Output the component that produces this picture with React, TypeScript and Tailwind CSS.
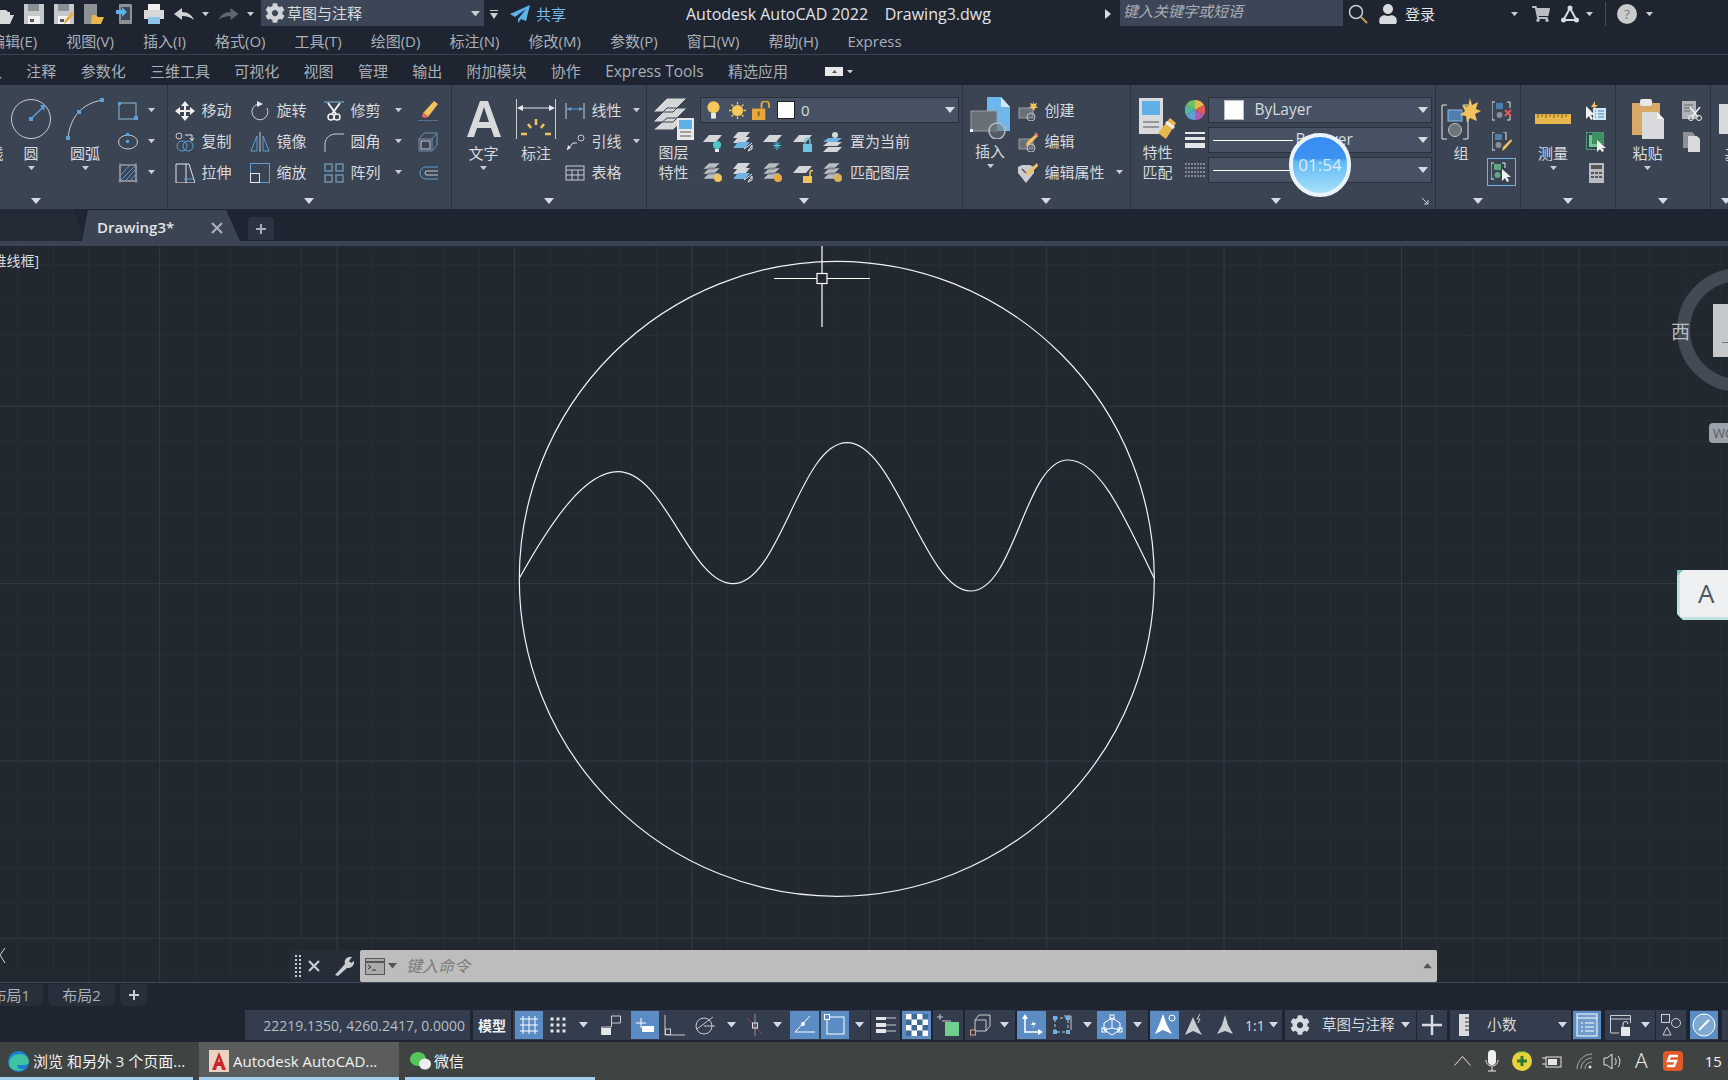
import type { ReactNode } from "react";
import { FaCog, FaUser, FaShoppingCart } from "react-icons/fa";

const G = "#c9ccd0";
const L = "#e4e6e8";
const B = "#5f9fd6";
const Y = "#f2c25c";

const S = ({ w = 20, h = 20, children }: { w?: number; h?: number; children: ReactNode }) => (
  <svg width={w} height={h} viewBox={`0 0 ${w} ${h}`} fill="none" className="shrink-0">
    {children}
  </svg>
);

const Caret = ({ c = "#c9ccd0", w = 8 }: { c?: string; w?: number }) => (
  <svg width={w} height={w * 0.6} viewBox="0 0 10 6" className="shrink-0">
    <path d="M0 0h10L5 6z" fill={c} />
  </svg>
);

// quick access bar
const Floppy = ({ children }: { children?: ReactNode }) => (
  <S>
    <path d="M0 0h20v20H0z" fill="#c6c8ca" />
    <rect x="4" width="11" height="7" fill="#8b9096" />
    <rect x="4" y="12" width="12" height="8" fill="#f0f0f0" />
    <rect x="6" y="15" width="4" height="3" fill="#555" />
    {children}
  </S>
);
const TitleIcons = {
  folder: (
    <S w={14} h={20}>
      <path d="M0 6h6l2 2h2v3h4l-4 9H0z" fill="#d8dadc" />
    </S>
  ),
  third: (
    <S>
      <rect x="0" y="0" width="13" height="20" fill="#8d9196" />
      <path d="M8 11h4l2 2h6l-3 7H7z" fill="#e8b84c" />
    </S>
  ),
  fourth: (
    <S w={16}>
      <rect x="3" y="0" width="13" height="20" rx="1" fill="#8d9196" />
      <rect x="5" y="3" width="9" height="13" fill="#3c4656" />
      <path d="M0 6h6V3l5 5-5 5v-3H0z" fill="#5bb3e6" />
    </S>
  ),
  print: (
    <S>
      <rect x="4" y="0" width="12" height="6" fill="#f0f0f0" />
      <rect x="0" y="6" width="20" height="9" fill="#d8d8d8" />
      <rect x="4" y="13" width="12" height="7" fill="#8fc4ea" />
    </S>
  ),
};

const Tool = ({
  icon,
  label,
  caret,
  gap = "ml-[7px]",
  caretGap = "ml-[14px]",
}: {
  icon: ReactNode;
  label?: string;
  caret?: boolean;
  gap?: string;
  caretGap?: string;
}) => (
  <div className="flex items-center h-[31px]">
    <span className="w-[20px] flex justify-center">{icon}</span>
    {label && <span className={`${gap} text-[15px] whitespace-nowrap text-[#d7dade]`}>{label}</span>}
    {caret && (
      <span className={caretGap}>
        <Caret w={7} />
      </span>
    )}
  </div>
);

const Big = ({
  w,
  icon,
  lines,
  caret,
  top = "h-[48px]",
}: {
  w: string;
  icon: ReactNode;
  lines: string[];
  caret?: boolean;
  top?: string;
}) => (
  <div className={`${w} flex flex-col items-center shrink-0`}>
    <div className={`${top} flex items-center justify-center`}>{icon}</div>
    {lines.map((l) => (
      <span key={l} className="h-[20px] leading-[20px] text-[15px] whitespace-nowrap text-[#d7dade]">
        {l}
      </span>
    ))}
    {caret && (
      <div className="h-[10px] flex items-center">
        <Caret w={7} />
      </div>
    )}
  </div>
);

const Panel = ({ w, children, corner }: { w: string; children: ReactNode; corner?: boolean }) => (
  <div className={`${w} shrink-0 h-full flex flex-col border-r border-[#2a313c] relative`}>
    <div className="flex-1 flex pt-[10px] min-h-0">{children}</div>
    <div className={`h-[21px] pt-[5px] flex items-center justify-center ${corner ? "pr-[14px]" : ""}`}>
      <Caret w={10} c="#d7dade" />
    </div>
    {corner && (
      <svg width="9" height="9" viewBox="0 0 9 9" className="absolute right-[5px] bottom-[3px]">
        <path d="M1 1l6 6M7 3v4H3" stroke="#c9ccd0" fill="none" />
      </svg>
    )}
  </div>
);

const Drop = ({ children, className = "" }: { children: ReactNode; className?: string }) => (
  <div className={`${className} h-[26px] bg-[#465264] border border-[#2a313c] flex items-center relative`}>
    {children}
    <span className="absolute right-[3px] top-[9px]">
      <Caret w={10} c="#d7dade" />
    </span>
  </div>
);

const I = {
  circle: (
    <svg width="40" height="40" viewBox="0 0 40 40" fill="none">
      <circle cx="20" cy="20" r="19.5" stroke={G} />
      <path d="M20 20l12-12" stroke={B} strokeWidth="1.5" />
      <rect x="18" y="18" width="4" height="4" fill={B} />
      <path d="M29 6l5 0-1 6z" fill={B} />
    </svg>
  ),
  arc: (
    <svg width="38" height="42" viewBox="0 0 38 42" fill="none">
      <path d="M2 40C4 20 15 6 36 2" stroke={G} />
      <rect y="38" width="4" height="4" fill={B} />
      <rect x="11" y="12" width="4" height="4" fill={B} />
      <rect x="34" width="4" height="4" fill={B} />
    </svg>
  ),
  rect: (
    <S>
      <rect x="1" y="2" width="17" height="16" stroke="#8fb8dc" />
      <rect x="0" y="1" width="3" height="3" fill={B} />
      <rect x="16" y="15" width="4" height="4" fill={B} />
    </S>
  ),
  ellipse: (
    <S>
      <ellipse cx="10" cy="10" rx="9.5" ry="7" stroke={G} />
      <rect x="8" y="8" width="3" height="3" fill={B} />
      <rect x="8" y="1" width="3" height="3" fill={B} />
    </S>
  ),
  hatch: (
    <S>
      <rect x="2" y="2" width="16" height="16" stroke={G} />
      <path d="M3 12l8-9M3 17L17 3M8 17l9-10M13 17l4-5" stroke={B} />
      <path d="M2 0v20M18 0v20M0 18h20" stroke="#8d939b" />
    </S>
  ),
  move: (
    <S>
      <path d="M10 0l4 5h-3v4h4V6l5 4-5 4v-3h-4v4h3l-4 5-4-5h3v-4H5v3l-5-4 5-4v3h4V5H6z" fill="#f0f0f0" />
    </S>
  ),
  rotate: (
    <S>
      <path d="M8 3a8 8 0 1 0 9 4" stroke={G} />
      <path d="M7 0l6 3-6 3z" fill={L} />
    </S>
  ),
  trim: (
    <S>
      <path d="M0 1h20" stroke="#6d90ad" strokeWidth="1.5" />
      <path d="M4 2l8 11M16 2l-8 11" stroke="#f0f0f0" strokeWidth="2" />
      <circle cx="7" cy="16" r="3" stroke="#f0f0f0" strokeWidth="1.5" />
      <circle cx="13" cy="16" r="3" stroke="#f0f0f0" strokeWidth="1.5" />
    </S>
  ),
  erase: (
    <S>
      <path d="M16 0l4 3-10 13-5 0 1-5z" fill={Y} />
      <path d="M5 11l5 4-2 2-4-1z" fill="#e66" />
      <path d="M0 20h20" stroke={B} />
    </S>
  ),
  copy: (
    <S>
      <rect x="1" y="1" width="6" height="6" rx="3" stroke={G} />
      <path d="M10 3h7v5M15 6l2 3 2-3" stroke={L} />
      <circle cx="7" cy="14" r="5" stroke={B} />
      <circle cx="13" cy="14" r="5" stroke={B} />
    </S>
  ),
  mirror: (
    <S>
      <path d="M7 4L1 19h6z" stroke={B} />
      <path d="M13 4l6 15h-6z" stroke={B} />
      <path d="M10 0v20" stroke={G} />
    </S>
  ),
  fillet: (
    <S>
      <path d="M1 20V12C1 6 6 2 12 2h8" stroke={G} />
    </S>
  ),
  solid: (
    <S>
      <path d="M1 7h13v12H1zM1 7l5-6h13l-5 6M19 1v12l-5 6" stroke="#6d90ad" />
      <rect x="3" y="9" width="9" height="8" stroke={G} />
    </S>
  ),
  stretch: (
    <S>
      <path d="M1 1h10v19H1zM11 1h3l6 19h-9" stroke={L} />
      <path d="M9 16h9" stroke={B} />
    </S>
  ),
  scale: (
    <S>
      <rect x="0.5" y="0.5" width="19" height="19" stroke={B} />
      <rect x="0.5" y="10.5" width="9" height="9" stroke={L} />
    </S>
  ),
  array: (
    <S>
      <rect x="1" y="1" width="7" height="7" stroke="#6d90ad" strokeWidth="1.5" />
      <rect x="12" y="1" width="7" height="7" stroke="#6d90ad" strokeWidth="1.5" />
      <rect x="1" y="12" width="7" height="7" stroke="#6d90ad" strokeWidth="1.5" />
      <rect x="12" y="12" width="7" height="7" stroke="#6d90ad" strokeWidth="1.5" />
    </S>
  ),
  offset: (
    <S>
      <path d="M20 4H8a6 6 0 0 0 0 12h12" stroke={B} />
      <path d="M20 8H9a2 2 0 0 0 0 4h11" stroke={G} />
    </S>
  ),
  bigA: (
    <svg width="34" height="36" viewBox="0 0 34 36">
      <path d="M13 0h8l13 36h-7l-3-9H10l-3 9H0zM12 21h10L17 6z" fill="#d8dadc" fillRule="evenodd" />
    </svg>
  ),
  dim: (
    <svg width="40" height="40" viewBox="0 0 40 40" fill="none">
      <path d="M0.5 0v40M39.5 0v40" stroke={G} />
      <path d="M2 9h36" stroke={L} />
      <path d="M1 9l6-3v6zM39 9l-6-3v6z" fill={L} />
      <path d="M20 20v6M12 25l3 4M28 25l-3 4M5 35h6M29 35h6" stroke={Y} strokeWidth="2.5" />
    </svg>
  ),
  linear: (
    <S>
      <path d="M1 2v16M19 2v16" stroke={G} />
      <path d="M2 8h16" stroke={B} />
      <path d="M2 8l4-2v4zM18 8l-4-2v4z" fill={B} />
    </S>
  ),
  leader: (
    <S>
      <path d="M2 18l6-7h4" stroke={L} />
      <path d="M2 18l1-5 3 3z" fill={L} />
      <circle cx="16" cy="6" r="3" stroke={G} />
    </S>
  ),
  table: (
    <S>
      <rect x="1" y="3" width="18" height="14" stroke={G} />
      <path d="M1 7h18M1 12h18M7 7v10M13 7v10" stroke={G} />
    </S>
  ),
  layers: (
    <svg width="42" height="42" viewBox="0 0 42 42" fill="none">
      <path d="M14 0h20l-14 14H0zM14 10h20L20 24H0zM14 20h20L20 32H0z" fill="#d4d6d8" stroke="#3b4453" />
      <rect x="24" y="20" width="17" height="24" fill="#e8e8e8" />
      <rect x="26" y="22" width="13" height="9" fill="#5fb0e6" />
      <path d="M27 34h11M27 38h11" stroke="#555" />
    </svg>
  ),
  layerBulb: (
    <S>
      <path d="M6 3h13l-6 7H0z" fill="#d4d6d8" />
      <circle cx="14" cy="13" r="4" fill="#50c8c8" />
      <rect x="12" y="17" width="4" height="3" fill="#e8e8e8" />
    </S>
  ),
  layerArrow: (
    <S>
      <path d="M5 0h12L12 6H0zM5 5h12l-5 6H0z" fill="#d4d6d8" />
      <path d="M5 10h12l-5 6H0z" fill="#6fb3e6" />
      <path d="M11 17l8-6M15 19l4-2v-4z" stroke="#f0f0f0" />
    </S>
  ),
  layerFrost: (
    <S>
      <path d="M6 3h13l-6 7H0z" fill="#d4d6d8" />
      <path d="M14 9v9M10 13.500h8M11 10.500l6 6M17 10.500l-6 6" stroke="#50c8e0" />
    </S>
  ),
  layerLock: (
    <S>
      <path d="M6 3h13l-6 7H0z" fill="#d4d6d8" />
      <rect x="10" y="12" width="9" height="8" fill="#6cc6e0" />
      <path d="M12 12V9a2.500 2.500 0 0 1 5 0v3" stroke="#6cc6e0" strokeWidth="1.5" />
    </S>
  ),
  layerCurrent: (
    <S>
      <circle cx="12" cy="3" r="3" fill="#d8d8d8" />
      <path d="M5 6h14l-5 4H0z" fill="#6fb3e6" />
      <path d="M5 10h14l-5 4H0zM5 15h14l-5 5H0z" fill="#d4d6d8" />
    </S>
  ),
  layerGrey: (c: string) => (
    <S>
      <path d="M6 0h11l-6 6H0zM6 5h11l-6 6H0zM6 10h11l-6 6H0z" fill="#b8bbbf" stroke="#3b4453" strokeWidth=".5" />
      <circle cx="15" cy="15" r="4" fill={c} />
    </S>
  ),
  layerUnlock: (
    <S>
      <path d="M6 3h13l-6 7H0z" fill="#d4d6d8" />
      <rect x="10" y="13" width="9" height="7" fill={Y} />
      <path d="M17 13v-3a2.500 2.500 0 0 1 5 0" stroke={Y} strokeWidth="1.5" />
    </S>
  ),
  bulb: (
    <svg width="13" height="19" viewBox="0 0 16 22">
      <circle cx="8" cy="7" r="7.500" fill="#f6c85c" />
      <rect x="5" y="14" width="6" height="7" fill="#e8e8e8" />
    </svg>
  ),
  sun: (
    <svg width="17" height="17" viewBox="0 0 20 20">
      <circle cx="10" cy="10" r="6.500" fill="#f6c85c" />
      <path d="M10 0v3M10 17v3M0 10h3M17 10h3M3 3l2 2M15 15l2 2M17 3l-2 2M3 17l2-2" stroke="#f6c85c" strokeWidth="1.5" />
    </svg>
  ),
  lockOpen: (
    <svg width="19" height="19" viewBox="0 0 20 20" fill="none">
      <rect x="0" y="8" width="14" height="12" fill="#e8a93c" />
      <path d="M10 8V4a4 4 0 0 1 8 0v3" stroke="#e8a93c" strokeWidth="2" />
      <rect x="6" y="11" width="2" height="5" fill="#8a5f16" />
    </svg>
  ),
  insert: (
    <svg width="40" height="42" viewBox="0 0 40 42" fill="none">
      <path d="M17 0h14l9 10v24H17z" fill="#6fb6ec" />
      <path d="M31 0l9 10h-9z" fill="#cfe6f7" />
      <rect x="1" y="14" width="26" height="20" fill="#6a7078" stroke="#9a9ea4" />
      <circle cx="27" cy="34" r="8" stroke="#b8bbbf" strokeWidth="1.5" fill="#6a707888" />
      <rect y="32" width="3" height="3" fill="#f0f0f0" />
    </svg>
  ),
  create: (
    <S>
      <rect x="1" y="7" width="14" height="10" stroke="#9a9ea4" fill="#6a7078" />
      <circle cx="13" cy="16" r="4" stroke="#c0c3c7" />
      <path d="M15 0l1 3 3-1-1 3 2 2-3 0-1 3-2-3-3 0 2-2-1-3 3 1z" fill={Y} />
    </S>
  ),
  editBlock: (
    <S>
      <rect x="1" y="7" width="14" height="10" stroke="#9a9ea4" fill="#6a7078" />
      <circle cx="13" cy="16" r="4" stroke="#c0c3c7" />
      <path d="M19 1l1 3-9 9-3 1 1-4z" fill={Y} />
      <path d="M17 1l3 3" stroke="#e66" strokeWidth="2" />
    </S>
  ),
  editAttr: (
    <S>
      <path d="M0 4l4-2h8l4 2v6l-8 10-8-10z" fill="#c9ccd0" />
      <path d="M4 6l4 4" stroke="#555" strokeWidth="1.5" />
      <path d="M19 0l1 3-9 9-3 1 1-4z" fill={Y} />
    </S>
  ),
  matchProp: (
    <svg width="38" height="42" viewBox="0 0 38 42" fill="none">
      <rect width="24" height="36" fill="#d8dadc" />
      <rect x="3" y="3" width="18" height="14" fill="#5fb0e6" />
      <path d="M4 24h16M4 29h16" stroke="#555" />
      <path d="M31 20l6 5-10 16-8-6z" fill="#e8b84c" />
      <path d="M27 24l8 6" stroke="#f0f0f0" strokeWidth="3" />
    </svg>
  ),
  wheel: (
    <svg width="20" height="20" viewBox="0 0 20 20">
      <path d="M10 10V0a10 10 0 0 1 9 5z" fill="#e8b84c" />
      <path d="M10 10l9-5a10 10 0 0 1 0 10z" fill="#e05a5a" />
      <path d="M10 10l9 5a10 10 0 0 1-9 5z" fill="#b05ab0" />
      <path d="M10 10v10a10 10 0 0 1-9-5z" fill="#5f9fd6" />
      <path d="M10 10l-9 5a10 10 0 0 1 0-10z" fill="#50b8a0" />
      <path d="M10 10L1 5a10 10 0 0 1 9-5z" fill="#70c060" />
    </svg>
  ),
  weight: (
    <S>
      <rect y="2" width="20" height="2" fill={L} />
      <rect y="7" width="20" height="3" fill={L} />
      <rect y="13" width="20" height="5" fill={L} />
    </S>
  ),
  ltype: (
    <S>
      <path d="M0 4h20M0 8h20M0 12h20M0 16h20" stroke={G} strokeDasharray="2 1" />
    </S>
  ),
  group: (
    <svg width="40" height="42" viewBox="0 0 40 42" fill="none">
      <path d="M6 7H1v34h5M22 7h5v34h-5" stroke={L} />
      <rect x="7" y="12" width="14" height="11" fill="#4f7fae" stroke="#8fb8dc" />
      <circle cx="14" cy="32" r="6.500" fill="#6f747a" stroke="#c0c3c7" />
      <path d="M29 0l2 7 6-3-2 7 5 2-6 3 2 7-7-3-3 5-1-7-6-1 5-4-3-6 6 2z" fill={Y} />
    </svg>
  ),
  ungroup: (
    <S>
      <path d="M3 1H0v18h3M15 1h3v6M18 14v5h-3" stroke={L} />
      <rect x="4" y="2" width="7" height="6" fill="#4f7fae" />
      <circle cx="7.500" cy="14" r="3" fill="#8a8f94" />
      <path d="M13 9l6 6M19 9l-6 6" stroke="#e05a5a" strokeWidth="2" />
    </S>
  ),
  editGroup: (
    <S>
      <path d="M3 0H0v18h3M11 0h3v8" stroke={L} />
      <rect x="3" y="2" width="7" height="6" fill="#4f7fae" />
      <circle cx="6.500" cy="13" r="3" fill="#8a8f94" />
      <path d="M19 7l1 2-7 8-3 2 1-4z" fill={Y} />
    </S>
  ),
  selGroup: (
    <S>
      <path d="M3 1H0v16h3M11 1h3v5" stroke={L} />
      <rect x="3" y="2" width="7" height="6" fill="#5fa87f" />
      <circle cx="6.500" cy="13" r="3" fill="#5fa87f" />
      <path d="M11 7v12l3-3 2 4 2-1-2-4h4z" fill="#f0f0f0" />
    </S>
  ),
  ruler: (
    <svg width="36" height="10" viewBox="0 0 36 10">
      <rect width="36" height="10" fill="#e8b84c" />
      <path d="M3 0v4M7 0v3M11 0v4M15 0v3M19 0v4M23 0v3M27 0v4M31 0v3" stroke="#7d5f1c" />
    </svg>
  ),
  quickProp: (
    <S>
      <path d="M9 0L5 6h3L6 9l6-5H9z" fill={Y} />
      <rect x="7" y="7" width="13" height="12" fill="#cfe6f7" />
      <path d="M12 10h6M12 13h6M12 16h6M9 10h1M9 13h1M9 16h1" stroke="#4f7fae" />
      <path d="M0 5v13l3-3 2 4 2-1-2-4h4z" fill="#f0f0f0" />
    </S>
  ),
  selectSim: (
    <S>
      <rect x="0.5" y="0.5" width="17" height="17" stroke="#50c080" strokeDasharray="2 1" />
      <rect x="3" y="3" width="12" height="12" fill="#70c890" />
      <rect x="6" y="1" width="11" height="11" fill="#3e9060" />
      <path d="M11 8v12l3-3 2 3 2-1-2-3h4z" fill="#f0f0f0" />
    </S>
  ),
  calc: (
    <svg width="15" height="20" viewBox="0 0 15 20">
      <rect width="15" height="20" fill="#b8bbbf" />
      <rect x="2" y="2" width="11" height="4" fill="#555" />
      <path d="M2 9h3v2H2zM6 9h3v2H6zM10 9h3v2h-3zM2 13h3v2H2zM6 13h3v2H6zM10 13h3v2h-3z" fill="#555" />
    </svg>
  ),
  paste: (
    <svg width="32" height="40" viewBox="0 0 32 40">
      <rect y="4" width="28" height="32" fill="#d8a868" />
      <rect x="8" y="0" width="12" height="7" rx="2" fill="#e8e8e8" />
      <path d="M10 13h15l7 7v20H10z" fill="#d8dadc" />
      <path d="M25 13l7 7h-7z" fill="#f4f4f4" />
    </svg>
  ),
  cut: (
    <S>
      <path d="M0 0h14v18H0z" fill="#b0b3b7" />
      <path d="M2 4h9M2 7h9M2 10h6" stroke="#666" />
      <path d="M8 6l8 10M18 6l-8 10" stroke="#f0f0f0" strokeWidth="1.5" />
      <circle cx="9" cy="17" r="2.500" stroke="#f0f0f0" />
      <circle cx="17" cy="17" r="2.500" stroke="#f0f0f0" />
    </S>
  ),
  copyDoc: (
    <S>
      <path d="M1 0h9l3 3v13H1z" fill="#8d9196" />
      <path d="M6 4h9l3 3v13H6z" fill="#d8dadc" />
    </S>
  ),
};

const StatusIcons = {
  grid: (
    <S w={22} h={22}>
      <path d="M5 2v18M11 2v18M17 2v18M2 5h18M2 11h18M2 17h18" stroke="#fff" />
    </S>
  ),
  dots: (
    <S w={16} h={16}>
      {[2, 8, 14].map((y) =>
        [2, 8, 14].map((x) => <rect key={`${x}-${y}`} x={x - 1.5} y={y - 1.5} width="3" height="3" fill={L} />)
      )}
    </S>
  ),
  infer: (
    <S>
      <rect x="0" y="13" width="10" height="7" fill={L} />
      <path d="M0.5 20V12h10V1h9v7h-9" stroke={G} />
    </S>
  ),
  dyn: (
    <S>
      <path d="M1 8h10M6 3v10" stroke="#fff" />
      <rect x="7" y="11" width="12" height="6" fill="#fff" />
    </S>
  ),
  ortho: (
    <S w={22} h={22}>
      <path d="M2 1v20h20" stroke={G} />
      <rect x="2.5" y="15" width="5" height="5.5" stroke={G} />
    </S>
  ),
  polar: (
    <S>
      <circle cx="9" cy="11" r="8" stroke={G} />
      <path d="M2 14L18 2M9 11h11" stroke={G} />
    </S>
  ),
  osnap: (
    <S w={18} h={22}>
      <path d="M9 0v22" stroke="#8d939b" />
      <path d="M1 4l15 16" stroke="#a04848" />
      <rect x="6.5" y="9" width="5" height="5" stroke={L} />
    </S>
  ),
  angle: (
    <S w={22} h={22}>
      <path d="M1 18h20M1 18L16 2" stroke="#fff" />
      <circle cx="9" cy="10" r="2" fill="#fff" />
    </S>
  ),
  ucs: (
    <S w={22} h={22}>
      <rect x="3" y="3" width="17" height="17" stroke="#fff" />
      <rect x="0.5" y="0.5" width="5" height="5" stroke="#fff" fill="#5b8dc4" />
    </S>
  ),
  lweight: (
    <S>
      <rect y="2" width="10" height="3" fill={L} />
      <rect y="8" width="10" height="4" fill={L} />
      <rect y="14" width="10" height="4" fill={L} />
      <path d="M10 3h10M10 10h10M10 16h10" stroke={G} />
    </S>
  ),
  checker: (
    <S w={22} h={22}>
      <rect width="22" height="22" fill="#fff" />
      {[0, 1, 2, 3].map((r) =>
        [0, 1, 2, 3].map((c) =>
          (r + c) % 2 ? <rect key={`${r}${c}`} x={c * 5.5} y={r * 5.5} width="5.5" height="5.5" fill="#3f6a96" /> : null
        )
      )}
    </S>
  ),
  cycle: (
    <S w={22} h={22}>
      <path d="M0 3h6M3 0v6M5 7h9" stroke={G} />
      <rect x="8" y="8" width="14" height="14" fill="#6fcf8f" />
    </S>
  ),
  osnap3d: (
    <S w={21} h={22}>
      <path d="M5 6h11v11H5zM5 6l4-5h11v11l-4 5" stroke={G} />
      <rect x="0.5" y="16" width="5" height="5" stroke="#e0a080" />
    </S>
  ),
  otrack: (
    <S w={22} h={22}>
      <path d="M4 2v16h16" stroke="#fff" strokeWidth="1.5" />
      <path d="M4 0l3 5H1zM22 18l-5-3v6z" fill="#fff" />
      <path d="M13 6l-3 5h3l-2 4 4-6h-3z" fill="#fff" />
    </S>
  ),
  gizmo: (
    <S>
      <rect x="3" y="3" width="13" height="14" stroke={G} strokeDasharray="3 2" />
      <path d="M12 1h7v14" stroke={G} />
      <rect x="1" y="1" width="4" height="4" fill="#6fb3e6" />
      <rect x="14" y="1" width="4" height="4" fill="#6fb3e6" />
      <rect x="1" y="15" width="4" height="4" fill="#6fb3e6" />
      <rect x="14" y="15" width="4" height="4" fill="#6fb3e6" />
    </S>
  ),
  dgizmo: (
    <S w={22} h={22}>
      <path d="M11 4l8 5v7l-8 5-8-5V9z" stroke="#fff" />
      <path d="M11 4v10l8 2M11 14l-8 2" stroke="#fff" />
      <rect x="9" y="1" width="4" height="4" stroke="#fff" />
      <rect x="1" y="14" width="4" height="4" stroke="#fff" />
      <rect x="17" y="14" width="4" height="4" stroke="#fff" />
    </S>
  ),
  anno: (
    <S w={22} h={22}>
      <path d="M9 0l4 11 5 9-9-4-8 4 4-9z" fill="#fff" />
      <circle cx="18" cy="4" r="3" stroke="#fff" />
    </S>
  ),
  annoAuto: (
    <S w={22} h={22}>
      <path d="M9 3l4 9 5 9-9-4-8 4 4-9z" fill={G} />
      <path d="M16 0l-3 5h3l-2 4" stroke={G} />
    </S>
  ),
  annoFill: (
    <S w={20} h={22}>
      <path d="M10 1l3 10 5 9-8-3-8 3 5-9z" fill={G} />
    </S>
  ),
  unitsDoc: (
    <S w={11} h={22}>
      <path d="M0 0h10v22H0z" fill="#d8dadc" />
      <path d="M6 4h4M6 8h4M6 12h4M6 16h4" stroke="#333" />
    </S>
  ),
  quick: (
    <S w={22} h={24}>
      <rect x="1" y="1" width="20" height="22" stroke="#fff" fill="#6f9ccb" />
      <path d="M1 5h20M5 10h2M9 10h9M5 14h2M9 14h9M5 18h2M9 18h9" stroke="#fff" />
    </S>
  ),
  ui: (
    <S w={21} h={22}>
      <path d="M0.5 19V1.500h20V9M0.5 5h20M1 19h8" stroke={G} />
      <rect x="11" y="13" width="9" height="9" fill={L} />
      <path d="M13 13v-3a2.500 2.500 0 0 1 5 0" stroke={L} />
    </S>
  ),
  shapes: (
    <S w={20} h={22}>
      <rect x="0.5" y="0.5" width="8" height="8" stroke={G} />
      <circle cx="15" cy="9" r="4.500" stroke={G} />
      <path d="M6 13l4 8H2z" stroke={G} />
    </S>
  ),
  perf: (
    <S w={24} h={24}>
      <circle cx="12" cy="12" r="11" stroke="#fff" fill="#7fa9d3" />
      <path d="M7 17l10-10" stroke="#fff" strokeWidth="2" />
    </S>
  ),
};

const Btn = ({ w, active, children }: { w: string; active?: boolean; children?: ReactNode }) => (
  <div className={`${w} shrink-0 h-[28px] flex items-center justify-center ${active ? "bg-[#5b8dc4]" : ""}`}>{children}</div>
);
const Block = ({ w, children, ml = "" }: { w: string; children: ReactNode; ml?: string }) => (
  <div className={`${w} ${ml} shrink-0 h-full bg-[#333d4d] flex items-center`}>{children}</div>
);
const StatusCaret = ({ w }: { w: string }) => (
  <div className={`${w} shrink-0 flex justify-center`}>
    <Caret w={9} c="#d7dade" />
  </div>
);

const majorX = Array.from({ length: 10 }, (_, i) => 159.7 + i * 177.4);
const majorY = [229, 406.2, 583.6, 761, 938.4];
const minorX = Array.from({ length: 50 }, (_, i) => 17.8 + i * 35.48);
const minorY = Array.from({ length: 22 }, (_, i) => 229 + i * 35.48);

const Canvas = () => (
  <div className="relative flex-1 min-h-0 bg-[#212830] overflow-hidden border-b border-[#3f4754]">
    <svg width="1728" height="737" viewBox="0 246 1728 737" fill="none" className="absolute left-0 top-0">
      {minorX.map((x) => <path key={x} d={`M${x} 246V983`} stroke="#272f39" />)}
      {minorY.map((y) => <path key={y} d={`M0 ${y}H1728`} stroke="#272f39" />)}
      {majorX.map((x) => <path key={x} d={`M${x} 246V983`} stroke="#323a46" />)}
      {majorY.map((y) => <path key={y} d={`M0 ${y}H1728`} stroke="#323a46" />)}
      <circle cx="836.8" cy="578.8" r="317.5" stroke="#f2f2f2" strokeWidth="1.2" />
      <path
        d="M519.5 578C552 520 585 471.7 618 471.7C665 471.7 690 583.7 733 583.7C780 583.7 800 442.7 847 442.7C895 442.7 925 591 970.5 591C1015 591 1025 460 1068 460C1100 460 1125 518 1154 578"
        stroke="#f2f2f2"
        strokeWidth="1.2"
      />
      <path d="M822 246V273M822 283.5V327M774 278.5H817M827 278.5H870" stroke="#fff" strokeWidth="1.2" />
      <rect x="817" y="273.5" width="10" height="10" stroke="#fff" strokeWidth="1.2" />
      <path d="M5 948L0 955L5 963" stroke="#d8dadc" />
    </svg>

    <span className="absolute left-[-26px] top-[4px] text-[14px] text-[#d7dade] whitespace-nowrap">[二维线框]</span>

    {/* view cube */}
    <div className="absolute left-[1677px] top-[22px] w-[124px] h-[124px] rounded-full border-[13px] border-[#434a55]" />
    <span className="absolute left-[1671px] top-[73px] text-[19px] leading-[26px] text-[#b9bcc0]">西</span>
    <div className="absolute left-[1713px] top-[58px] w-[20px] h-[53px] bg-[#c6c8ca] flex items-end pl-[9px] pb-[14px]">
      <div className="w-[10px] h-[1px] bg-[#777]" />
    </div>
    <div className="absolute left-[1709px] top-[177px] w-[30px] h-[20px] rounded-[4px] bg-[#9da2aa] text-[13px] leading-[20px] pl-[4px] text-[#555c66]">WCS</div>

    {/* annotation tab */}
    <div className="absolute left-[1677px] top-[324px] w-[60px] h-[50px] bg-[#eef0f1] rounded-l-[4px] border-l-[3px] border-b-[3px] border-[#bfe3e0] [clip-path:polygon(6px_0,100%_0,100%_100%,6px_100%,0_calc(100%-6px),0_4px)] text-[26px] text-[#4c5660] flex items-center pl-[18px]">
      A
    </div>
    <div className="absolute left-[1677px] top-[324px] w-[6px] h-[6px] bg-[#6fc6c0] [clip-path:polygon(0_0,100%_0,0_100%)]" />

    {/* command line */}
    <div className="absolute left-[290px] top-[704px] w-[1147px] h-[32px] flex items-center bg-[#262d38] rounded-l-[3px]">
      <svg width="6" height="22" viewBox="0 0 6 22" className="ml-[5px]">
        {[0, 4, 8, 12, 16, 20].map((y) => (
          <g key={y} fill="#c9ccd0">
            <rect y={y} width="2" height="2" />
            <rect x="4" y={y} width="2" height="2" />
          </g>
        ))}
      </svg>
      <svg width="12" height="12" viewBox="0 0 12 12" className="ml-[7px]">
        <path d="M1 1l10 10M11 1L1 11" stroke="#c9ccd0" strokeWidth="2.2" />
      </svg>
      <svg width="20" height="20" viewBox="0 0 20 20" className="ml-[15px]">
        <path d="M0 19L10 8a5.500 5.500 0 0 1 7-7l-3 4 2 2 3-2a6 6 0 0 1-7 7L3 20z" fill="#c9ccd0" />
      </svg>
      <div className="ml-[5px] flex-1 h-full bg-[#bdbdbe] rounded-[2px] flex items-center relative">
        <svg width="20" height="17" viewBox="0 0 20 17" fill="none" className="ml-[5px]">
          <rect x=".5" y=".5" width="19" height="16" stroke="#555" fill="#a9aaab" />
          <path d="M.5 4h19" stroke="#555" strokeWidth="2" />
          <path d="M3 7l3 2-3 2M7 12h4" stroke="#333" />
        </svg>
        <span className="ml-[3px]">
          <Caret w={9} c="#555" />
        </span>
        <span className="ml-[9px] text-[16px] italic text-[#7c7c7c]">键入命令</span>
        <span className="absolute right-[5px] top-[13px] rotate-180">
          <Caret w={9} c="#555" />
        </span>
      </div>
    </div>
  </div>
);

const menus = ["编辑(E)", "视图(V)", "插入(I)", "格式(O)", "工具(T)", "绘图(D)", "标注(N)", "修改(M)", "参数(P)", "窗口(W)", "帮助(H)", "Express"];
const tabs = ["默认", "注释", "参数化", "三维工具", "可视化", "视图", "管理", "输出", "附加模块", "协作", "Express Tools", "精选应用"];

export default function App() {
  return (
    <div className="w-[1728px] h-[1080px] overflow-hidden flex flex-col bg-[#1e2530] text-[#d7dade] font-['Open_Sans','Noto_Sans_CJK_SC',sans-serif]">
      {/* title bar */}
      <div className="h-[28px] shrink-0 flex items-center">
        {TitleIcons.folder}
        <span className="ml-[10px]"><Floppy /></span>
        <span className="ml-[10px]">
          <Floppy>
            <path d="M18 8l2 2-7 8-3 2 1-4z" fill="#e8a93c" />
          </Floppy>
        </span>
        <span className="ml-[10px]">{TitleIcons.third}</span>
        <span className="ml-[12px]">{TitleIcons.fourth}</span>
        <span className="ml-[12px]">{TitleIcons.print}</span>
        <svg width="20" height="14" viewBox="0 0 20 14" className="ml-[10px]">
          <path d="M0 7L8 1v4c6 0 10 3 12 8-4-3-7-4-12-4v4z" fill="#cfd1d4" />
        </svg>
        <span className="ml-[8px]"><Caret w={7} /></span>
        <svg width="21" height="14" viewBox="0 0 20 14" className="ml-[9px]">
          <path d="M20 7L12 1v4C6 5 2 8 0 13c4-3 7-4 12-4v4z" fill="#5f6670" />
        </svg>
        <span className="ml-[8px]"><Caret w={7} /></span>
        <div className="ml-[7px] w-[223px] h-[26px] self-start bg-[#3c4656] flex items-center relative">
          <FaCog className="ml-[4px] text-[#d0d2d5] text-[20px]" />
          <span className="ml-[2px] text-[15px] text-[#d7dade]">草图与注释</span>
          <span className="absolute right-[4px] top-[11px]"><Caret w={9} /></span>
        </div>
        <svg width="8" height="9" viewBox="0 0 8 9" className="ml-[6px]">
          <path d="M0 0h8v1H0zM0 3h8L4 9z" fill="#c9ccd0" />
        </svg>
        <svg width="20" height="18" viewBox="0 0 20 18" className="ml-[12px]">
          <path d="M20 0L0 9l5 3 11-8-8 10v4l3-4 5 2z" fill="#5cb4ec" />
        </svg>
        <span className="ml-[6px] w-[30px] text-[15px] text-[#79bdf0] whitespace-nowrap">共享</span>
        <span className="ml-[120px] w-[303px] text-[16px] text-[#e2e4e6] whitespace-pre">Autodesk AutoCAD 2022    Drawing3.dwg</span>
        <svg width="6" height="10" viewBox="0 0 6 10" className="ml-[116px]">
          <path d="M0 0l6 5-6 5z" fill="#d7dade" />
        </svg>
        <div className="ml-[9px] w-[223px] h-[26px] self-start bg-[#3c4656] flex items-center pl-[3px] pb-[3px] text-[15px] italic text-[#a9aeb6]">键入关键字或短语</div>
        <svg width="20" height="20" viewBox="0 0 20 20" fill="none" className="ml-[5px]">
          <circle cx="8" cy="8" r="6.500" stroke="#c9ccd0" strokeWidth="1.5" />
          <path d="M13 13l6 6" stroke="#c49a52" strokeWidth="2" />
        </svg>
        <FaUser className="ml-[10px] text-[#d7dade] text-[20px]" />
        <span className="ml-[7px] w-[30px] text-[15px] text-[#e2e4e6] whitespace-nowrap">登录</span>
        <span className="ml-[76px]"><Caret w={7} /></span>
        <FaShoppingCart className="ml-[14px] text-[#b9bcc0] text-[18px]" />
        <svg width="20" height="20" viewBox="0 0 20 20" fill="none" className="ml-[10px]">
          <path d="M10 4L3.500 16h13z" stroke="#d7dade" strokeWidth="2" />
          <circle cx="10" cy="4" r="2.500" fill="#d7dade" />
          <circle cx="3.500" cy="16" r="2.500" fill="#d7dade" />
          <circle cx="16.500" cy="16" r="2.500" fill="#d7dade" />
        </svg>
        <span className="ml-[6px]"><Caret w={7} /></span>
        <div className="ml-[12px] w-[1px] h-[24px] bg-[#444d5a]" />
        <div className="ml-[11px] w-[20px] h-[20px] rounded-full bg-[#c8cacc] text-[#777] text-[13px] leading-[20px] text-center">?</div>
        <span className="ml-[9px]"><Caret w={7} /></span>
      </div>

      {/* menu bar */}
      <div className="h-[27px] shrink-0 flex items-center gap-[29px] ml-[-10px] border-b border-[#39424e] text-[15px] text-[#a9b0ba] whitespace-nowrap">
        {menus.map((m) => (
          <span key={m}>{m}</span>
        ))}
      </div>

      {/* ribbon tabs */}
      <div className="h-[30px] shrink-0 flex items-center gap-[24.3px] pt-[3px] ml-[-28px] text-[15px] text-[#a9b0ba] whitespace-nowrap">
        {tabs.map((t) => (
          <span key={t} className={t === "Express Tools" ? "text-[15.5px]" : ""}>
            {t}
          </span>
        ))}
        <div className="ml-[13px] flex items-center gap-[4px]">
          <div className="w-[18px] h-[9px] bg-[#e8e8e8] flex items-center justify-center">
            <svg width="5" height="3" viewBox="0 0 5 3"><path d="M2.5 0L5 3H0z" fill="#555" /></svg>
          </div>
          <Caret w={6} />
        </div>
      </div>

      {/* ribbon */}
      <div className="h-[124px] shrink-0 bg-[#3b4453] flex relative overflow-hidden">
        <div className="flex ml-[-95px] shrink-0 h-full">
          <Panel w="w-[262.5px]">
            <div className="pl-[47px] flex">
              <Big w="w-[58px]" icon={<span />} lines={["多段线"]} />
              <Big w="w-[42px]" icon={I.circle} lines={["圆"]} caret />
              <Big w="w-[66px]" icon={I.arc} lines={["圆弧"]} caret />
              <div>
                <Tool icon={I.rect} caret caretGap="ml-[10px]" />
                <Tool icon={I.ellipse} caret caretGap="ml-[10px]" />
                <Tool icon={I.hatch} caret caretGap="ml-[10px]" />
              </div>
            </div>
          </Panel>
        </div>
        <Panel w="w-[284px]">
          <div className="pl-[7px] flex">
            <div className="w-[75px]">
              <Tool icon={I.move} label="移动" />
              <Tool icon={I.copy} label="复制" />
              <Tool icon={I.stretch} label="拉伸" />
            </div>
            <div className="w-[74px]">
              <Tool icon={I.rotate} label="旋转" />
              <Tool icon={I.mirror} label="镜像" />
              <Tool icon={I.scale} label="缩放" />
            </div>
            <div className="w-[94px]">
              <Tool icon={I.trim} label="修剪" caret />
              <Tool icon={I.fillet} label="圆角" caret />
              <Tool icon={I.array} label="阵列" caret />
            </div>
            <div>
              <Tool icon={I.erase} />
              <Tool icon={I.solid} />
              <Tool icon={I.offset} />
            </div>
          </div>
        </Panel>
        <Panel w="w-[195.5px]">
          <Big w="w-[64px]" icon={I.bigA} lines={["文字"]} caret />
          <Big w="w-[41px]" icon={I.dim} lines={["标注"]} />
          <div className="ml-[8px]">
            <Tool icon={I.linear} label="线性" caret caretGap="ml-[11px]" />
            <Tool icon={I.leader} label="引线" caret caretGap="ml-[11px]" />
            <Tool icon={I.table} label="表格" />
          </div>
        </Panel>
        <Panel w="w-[315.5px]">
          <Big w="w-[53px]" icon={I.layers} lines={["图层", "特性"]} top="h-[47px]" />
          <div>
            <Drop className="w-[259px] mt-[2px] mb-[3px]">
              <span className="ml-[6px]">{I.bulb}</span>
              <span className="ml-[9px]">{I.sun}</span>
              <span className="ml-[6px]">{I.lockOpen}</span>
              <span className="ml-[6px] w-[18px] h-[18px] bg-white border border-[#222]" />
              <span className="ml-[6px] text-[15px]">0</span>
            </Drop>
            <div className="flex items-center h-[31px] pl-[3px] gap-[10px]">
              {I.layerBulb}
              {I.layerArrow}
              {I.layerFrost}
              {I.layerLock}
              {I.layerCurrent}
              <span className="ml-[-3px] text-[15px]">置为当前</span>
            </div>
            <div className="flex items-center h-[31px] pl-[3px] gap-[10px]">
              {I.layerGrey(Y)}
              {I.layerArrow}
              {I.layerGrey("#e8a93c")}
              {I.layerUnlock}
              {I.layerGrey("#d8b060")}
              <span className="ml-[-3px] text-[15px]">匹配图层</span>
            </div>
          </div>
        </Panel>
        <Panel w="w-[168px]">
          <Big w="w-[55px]" icon={I.insert} lines={["插入"]} caret top="h-[46px]" />
          <div>
            <Tool icon={I.create} label="创建" />
            <Tool icon={I.editBlock} label="编辑" />
            <div className="flex items-center h-[31px]">
              {I.editAttr}
              <span className="ml-[7px] text-[15px]">编辑属性</span>
              <span className="ml-[11px]"><Caret w={7} /></span>
            </div>
          </div>
        </Panel>
        <Panel w="w-[305px]" corner>
          <Big w="w-[54px]" icon={I.matchProp} lines={["特性", "匹配"]} top="h-[47px]" />
          <div className="pt-[2px] flex flex-col gap-[4px]">
            <div className="flex items-center gap-[3px]">
              {I.wheel}
              <Drop className="w-[224px]">
                <span className="ml-[15px] w-[20px] h-[20px] bg-white border border-[#b8bbbf]" />
                <span className="ml-[11px] text-[15.5px]">ByLayer</span>
              </Drop>
            </div>
            <div className="flex items-center gap-[3px]">
              {I.weight}
              <Drop className="w-[224px]">
                <span className="ml-[4px] w-[80px] h-[1px] bg-white" />
                <span className="ml-[3px] text-[15.5px]">ByLayer</span>
              </Drop>
            </div>
            <div className="flex items-center gap-[3px]">
              {I.ltype}
              <Drop className="w-[224px]">
                <span className="ml-[4px] w-[90px] h-[1px] bg-white" />
              </Drop>
            </div>
          </div>
        </Panel>
        <Panel w="w-[85.5px]">
          <Big w="w-[51px]" icon={I.group} lines={["组"]} />
          <div className="ml-[5px] w-[20px]">
            <Tool icon={I.ungroup} />
            <Tool icon={I.editGroup} />
            <div className="h-[28px] w-[29px] ml-[-5px] mt-[1px] border border-[#6fb3e6] flex items-center justify-center">{I.selGroup}</div>
          </div>
        </Panel>
        <Panel w="w-[94.5px]">
          <Big w="w-[64px]" icon={I.ruler} lines={["测量"]} caret />
          <div className="ml-[1px]">
            <Tool icon={I.quickProp} />
            <Tool icon={I.selectSim} />
            <Tool icon={I.calc} />
          </div>
        </Panel>
        <Panel w="w-[95px]">
          <Big w="w-[64px]" icon={I.paste} lines={["粘贴"]} caret />
          <div className="ml-[2px]">
            <Tool icon={I.cut} />
            <Tool icon={I.copyDoc} />
          </div>
        </Panel>
        <Panel w="w-[32px]">
          <Big w="w-[28px]" icon={<div className="ml-[8px] w-[20px] h-[30px] bg-[#d8dadc]" />} lines={[""]} />
          <span className="absolute left-[14px] top-[58px] text-[15px]">基</span>
        </Panel>

        {/* recording timer */}
        <div className="absolute left-[1289px] top-[48px] w-[62px] h-[64px] rounded-full border-[4px] border-[#e9f3f9] bg-[linear-gradient(180deg,#3a8cf0_0%,#3b93f0_38%,#62b9f6_44%,#a8e2f9_100%)] flex items-center justify-center text-[17px] text-white/75">
          01:54
        </div>
      </div>

      {/* document tabs */}
      <div className="h-[32px] shrink-0 flex items-end">
        <div className="w-[84px] h-[32px] bg-[#232b36] rounded-br-[10px] [clip-path:polygon(0_0,74px_0,84px_100%,0_100%)]" />
        <div className="w-[158px] ml-[-2px] h-[31px] pt-[4px] bg-[#3b4453] [clip-path:polygon(6px_0,144px_0,158px_100%,0_100%)] flex items-center">
          <span className="ml-[15px] text-[15px] font-semibold text-[#e2e4e6]">Drawing3*</span>
          <svg width="12" height="12" viewBox="0 0 12 12" className="ml-[37px]">
            <path d="M1 1l10 10M11 1L1 11" stroke="#a9aeb6" strokeWidth="2.2" />
          </svg>
        </div>
        <div className="ml-[8px] w-[26px] h-[23px] mb-[1px] bg-[#2b3340] rounded-t-[4px] flex items-center justify-center">
          <svg width="10" height="10" viewBox="0 0 10 10">
            <path d="M5 0v10M0 5h10" stroke="#a9aeb6" strokeWidth="2" />
          </svg>
        </div>
      </div>
      <div className="h-[5px] shrink-0 bg-[#3b4453]" />

      <Canvas />

      {/* layout tabs */}
      <div className="h-[24px] shrink-0 flex items-center text-[15px] text-[#a9b0ba]">
        <div className="w-[43px] h-[22px] bg-[#282f3b] rounded-br-[6px] flex items-center justify-end pr-[13px]">
          <span className="whitespace-nowrap">布局1</span>
        </div>
        <div className="ml-[5px] w-[67px] h-[22px] bg-[#282f3b] rounded-b-[6px] flex items-center justify-center">布局2</div>
        <div className="ml-[5px] w-[27px] h-[22px] bg-[#282f3b] rounded-b-[6px] flex items-center justify-center">
          <svg width="10" height="10" viewBox="0 0 10 10">
            <path d="M5 0v10M0 5h10" stroke="#c9ccd0" strokeWidth="2" />
          </svg>
        </div>
      </div>

      {/* status bar */}
      <div className="h-[30px] mt-[3px] shrink-0 flex text-[#d7dade]">
        <div className="w-[245px] shrink-0" />
        <div className="w-[225px] shrink-0 h-full bg-[#333d4d] flex items-center justify-end pr-[5px] text-[14px] text-[#b8bec6] whitespace-nowrap">
          22219.1350, 4260.2417, 0.0000
        </div>
        <div className="ml-[3px] w-[38px] shrink-0 h-full bg-[#333d4d] flex items-center justify-center text-[14px] font-semibold text-[#f0f0f0]">模型</div>
        <Block w="w-[277px]" ml="ml-[2px]">
          <div className="w-[2px]" />
          <Btn w="w-[28px]" active>{StatusIcons.grid}</Btn>
          <Btn w="w-[30px]">{StatusIcons.dots}</Btn>
          <StatusCaret w="w-[20px]" />
          <Btn w="w-[36px]">{StatusIcons.infer}</Btn>
          <div className="w-[2px]" />
          <Btn w="w-[28px]" active>{StatusIcons.dyn}</Btn>
          <Btn w="w-[30px]">{StatusIcons.ortho}</Btn>
          <Btn w="w-[32px]">{StatusIcons.polar}</Btn>
          <StatusCaret w="w-[20px]" />
          <Btn w="w-[27px]">{StatusIcons.osnap}</Btn>
          <StatusCaret w="w-[19px]" />
        </Block>
        <Block w="w-[80px]">
          <Btn w="w-[29px]" active>{StatusIcons.angle}</Btn>
          <div className="w-[2px]" />
          <Btn w="w-[28px]" active>{StatusIcons.ucs}</Btn>
          <StatusCaret w="w-[21px]" />
        </Block>
        <Block w="w-[29px]" ml="ml-[1px]"><Btn w="w-[29px]">{StatusIcons.lweight}</Btn></Block>
        <Block w="w-[29px]" ml="ml-[2px]"><Btn w="w-[29px]" active>{StatusIcons.checker}</Btn></Block>
        <Block w="w-[30px]" ml="ml-[2px]"><Btn w="w-[30px]">{StatusIcons.cycle}</Btn></Block>
        <Block w="w-[50px]" ml="ml-[2px]">
          <Btn w="w-[30px]">{StatusIcons.osnap3d}</Btn>
          <StatusCaret w="w-[18px]" />
        </Block>
        <Block w="w-[131px]" ml="ml-[2px]">
          <Btn w="w-[29px]" active>{StatusIcons.otrack}</Btn>
          <Btn w="w-[31px]">{StatusIcons.gizmo}</Btn>
          <StatusCaret w="w-[20px]" />
          <Btn w="w-[29px]" active>{StatusIcons.dgizmo}</Btn>
          <StatusCaret w="w-[22px]" />
        </Block>
        <Block w="w-[132px]" ml="ml-[2px]">
          <Btn w="w-[29px]" active>{StatusIcons.anno}</Btn>
          <Btn w="w-[31px]">{StatusIcons.annoAuto}</Btn>
          <Btn w="w-[30px]">{StatusIcons.annoFill}</Btn>
          <span className="ml-[5px] text-[14px] text-[#d7dade]">1:1</span>
          <span className="ml-[4px]"><Caret w={9} c="#d7dade" /></span>
        </Block>
        <Block w="w-[131px]" ml="ml-[3px]">
          <FaCog className="ml-[5px] text-[20px] text-[#d7dade]" />
          <span className="ml-[12px] w-[74px] text-[14.5px] whitespace-nowrap">草图与注释</span>
          <span className="ml-[5px]"><Caret w={9} c="#d7dade" /></span>
        </Block>
        <Block w="w-[30px]" ml="ml-[1px]">
          <svg width="20" height="20" viewBox="0 0 20 20" className="ml-[5px]">
            <path d="M10 0v20M0 10h20" stroke="#d7dade" strokeWidth="2.5" />
          </svg>
        </Block>
        <Block w="w-[121px]" ml="ml-[3px]">
          <span className="ml-[9px]">{StatusIcons.unitsDoc}</span>
          <span className="ml-[17px] w-[60px] text-[14.5px] tracking-[0.5px]">小数</span>
          <span className="pl-[11px]"><Caret w={9} c="#d7dade" /></span>
        </Block>
        <Block w="w-[28px]" ml="ml-[2px]"><Btn w="w-[28px]" active>{StatusIcons.quick}</Btn></Block>
        <Block w="w-[50px]" ml="ml-[4px]">
          <span className="ml-[5px]">{StatusIcons.ui}</span>
          <span className="ml-[10px]"><Caret w={9} c="#d7dade" /></span>
        </Block>
        <Block w="w-[30px]" ml="ml-[1px]"><Btn w="w-[30px]">{StatusIcons.shapes}</Btn></Block>
        <Block w="w-[28px]" ml="ml-[4px]"><Btn w="w-[28px]" active>{StatusIcons.perf}</Btn></Block>
        <Block w="w-[10px]" ml="ml-[4px]"><span /></Block>
      </div>
      <div className="h-[2px] shrink-0" />

      {/* windows taskbar */}
      <div className="h-[38px] shrink-0 bg-[#3f4342] flex text-[15px] text-[#f2f2f2]">
        <div className="w-[193px] h-full flex items-center border-b-[3px] border-[#a4cef0] pl-[8px] pt-[3px]">
          <svg width="21" height="21" viewBox="0 0 21 21">
            <circle cx="10.5" cy="10.5" r="10.5" fill="#1f7fd4" />
            <path d="M1 13C1 6 7 3 12 3c5 0 9 4 9 8 0 2-2 3-5 3H9c0 3 3 5 7 4-3 3-14 2-15-5z" fill="#3fc4a0" />
          </svg>
          <span className="ml-[4px] whitespace-pre">浏览 和另外 3 个页面...</span>
        </div>
        <div className="ml-[6px] w-[200px] h-full bg-[#5a5d5c] flex items-center border-b-[3px] border-[#a4cef0] pl-[10px] pt-[3px]">
          <svg width="20" height="22" viewBox="0 0 20 22">
            <rect width="20" height="22" fill="#e9d3c4" />
            <path d="M10 2l7 18h-4l-1-4H8l-1 4H3zM9 12h2l-1-4z" fill="#c8282c" fillRule="evenodd" />
          </svg>
          <span className="ml-[4px] whitespace-nowrap">Autodesk AutoCAD...</span>
        </div>
        <div className="ml-[6px] w-[190px] h-full flex items-center border-b-[3px] border-[#a4cef0] pl-[5px] pt-[3px]">
          <svg width="21" height="18" viewBox="0 0 21 18">
            <ellipse cx="8" cy="7" rx="8" ry="7" fill="#54c65a" />
            <ellipse cx="15" cy="12" rx="6" ry="5.5" fill="#eee" />
          </svg>
          <span className="ml-[3px]">微信</span>
        </div>
        <div className="ml-[859px] flex items-center">
          <svg width="17" height="10" viewBox="0 0 17 10" fill="none">
            <path d="M.5 9.5l8-9 8 9" stroke="#e4e6e8" />
          </svg>
          <svg width="14" height="22" viewBox="0 0 14 22" fill="none" className="ml-[14px]">
            <rect x="3" width="8" height="15" rx="4" fill="#eee" />
            <path d="M1 10c0 8 12 8 12 0M7 17v4M3 21h8" stroke="#eee" />
          </svg>
          <svg width="20" height="20" viewBox="0 0 20 20" className="ml-[13px]">
            <circle cx="10" cy="10" r="10" fill="#e8d23c" />
            <path d="M2 4a10 10 0 0 1 16 0 12 12 0 0 0-16 0z" fill="#3c9a40" />
            <path d="M10 5v10M5 10h10" stroke="#2a7a30" strokeWidth="3" />
          </svg>
          <svg width="20" height="13" viewBox="0 0 20 13" fill="none" className="ml-[10px]">
            <rect x="4" y="2" width="15" height="10" stroke="#e4e6e8" />
            <rect x="6" y="4" width="9" height="6" fill="#e4e6e8" />
            <path d="M0 3h4M0 9h4" stroke="#e4e6e8" />
          </svg>
          <svg width="17" height="17" viewBox="0 0 17 17" fill="none" className="ml-[14px]">
            <path d="M1 16C1 8 8 1 16 1M5 16c0-6 5-11 11-11M9 16c0-4 3-7 7-7" stroke="#a8aaaa" />
            <circle cx="14" cy="14" r="1.5" fill="#e4e6e8" />
          </svg>
          <svg width="20" height="17" viewBox="0 0 20 17" fill="none" className="ml-[10px]">
            <path d="M1 5h3l5-4v15l-5-4H1z" stroke="#e4e6e8" />
            <path d="M12 5c1.5 2 1.5 5 0 7M15 3c2.500 3 2.500 8 0 11" stroke="#e4e6e8" />
          </svg>
          <span className="ml-[12px] text-[21px] font-light text-[#f0f0f0]">A</span>
          <svg width="20" height="20" viewBox="0 0 20 20" className="ml-[15px]">
            <rect width="20" height="20" rx="4" fill="#e05a28" />
            <path d="M15 5H7L5 10h8l-2 5H4" stroke="#fff" strokeWidth="2.5" fill="none" />
          </svg>
          <span className="ml-[22px] text-[15px] whitespace-nowrap">15</span>
        </div>
      </div>
    </div>
  );
}
